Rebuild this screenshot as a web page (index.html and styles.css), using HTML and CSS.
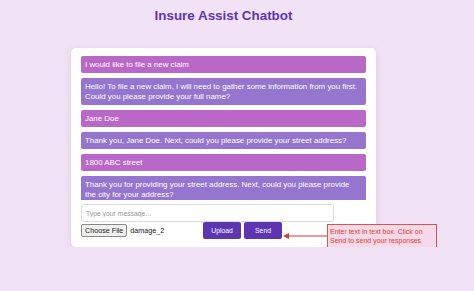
FILE: index.html
```html
<!DOCTYPE html>
<html>
<head>
    <title>Insure Assist Chatbot</title>
    <link rel="stylesheet" href="styles.css">
</head>
<body>
    <div class="page">
        <h1>Insure Assist Chatbot</h1>
        <div class="card">
            <div class="chat">
                <div class="msg user">I would like to file a new claim</div>
                <div class="msg bot">Hello! To file a new claim, I will need to gather some information from you first. Could you please provide your full name?</div>
                <div class="msg user">Jane Doe</div>
                <div class="msg bot">Thank you, Jane Doe. Next, could you please provide your street address?</div>
                <div class="msg user">1800 ABC street</div>
                <div class="msg bot">Thank you for providing your street address. Next, could you please provide the city for your address?</div>
            </div>
            <input type="text" class="message-input" placeholder="Type your message...">
            <div class="controls">
                <div class="file">
                    <span class="file-btn">Choose File</span>
                    <span class="file-name">damage_2</span>
                </div>
                <button class="btn">Upload</button>
                <button class="btn">Send</button>
            </div>
            <div class="note">
                <svg class="arrow" width="44" height="8" viewBox="0 0 44 8">
                    <line x1="5" y1="4" x2="44" y2="4" stroke="#d93a2b" stroke-width="1.2"/>
                    <polygon points="0,4 6,1 6,7" fill="#d93a2b"/>
                </svg>
                <div class="note-box">Enter text in text box. Click on<br>Send to send your responses</div>
            </div>
        </div>
    </div>
</body>
</html>
```

FILE: styles.css
```css
body {
    margin: 0;
    background-color: #f1e2f5;
    font-family: "Liberation Sans", Arial, sans-serif;
    color: #333;
}

.page {
    width: 447px;
    padding-top: 8px;
}

h1 {
    margin: 0;
    font-size: 13.4px;
    line-height: 16px;
    font-weight: bold;
    color: #5e35b1;
    text-align: center;
}

.card {
    position: relative;
    width: 285px;
    margin: 24px auto 0;
    padding: 8px 10px 8px;
    background: #fff;
    border-radius: 5px;
    box-shadow: 0 1px 6px rgba(120, 80, 150, 0.15);
}

.chat {
    height: 144px;
    overflow: hidden;
}

.msg {
    margin-bottom: 5px;
    padding: 3.5px 4px;
    border-radius: 2px;
    font-size: 7.9px;
    line-height: 10px;
    color: #fff;
}

.msg.user {
    background-color: #ba68c8;
}

.msg.bot {
    background-color: #9575cd;
}

.message-input {
    display: block;
    width: 253px;
    height: 18px;
    margin-top: 4px;
    padding: 0 4px;
    box-sizing: border-box;
    border: 1px solid #ddd;
    border-radius: 3px;
    font-family: "Liberation Sans", Arial, sans-serif;
    font-size: 6.8px;
    outline: none;
}

.message-input::placeholder {
    color: #999;
}

.controls {
    display: flex;
    align-items: center;
}

.file {
    display: flex;
    align-items: center;
    width: 122px;
    font-size: 7.2px;
    color: #222;
}

.file-btn {
    padding: 1px 3px;
    background: #efefef;
    border: 1px solid #888;
    border-radius: 2px;
    margin-right: 3px;
}

.btn {
    width: 38px;
    height: 17px;
    margin-right: 3px;
    padding: 0;
    border: none;
    border-radius: 2px;
    background-color: #5e35b1;
    color: #fff;
    font-family: "Liberation Sans", Arial, sans-serif;
    font-size: 6.8px;
}

.note {
    position: absolute;
    left: 212px;
    top: 176px;
    display: flex;
    align-items: center;
}

.arrow {
    display: block;
}

.note-box {
    width: 104px;
    padding: 2px 2px;
    border: 1px solid #d9534f;
    background: #f4d9ea;
    color: #e0402f;
    font-family: "Liberation Sans", Arial, sans-serif;
    font-size: 7px;
    line-height: 9px;
    white-space: nowrap;
}
```
